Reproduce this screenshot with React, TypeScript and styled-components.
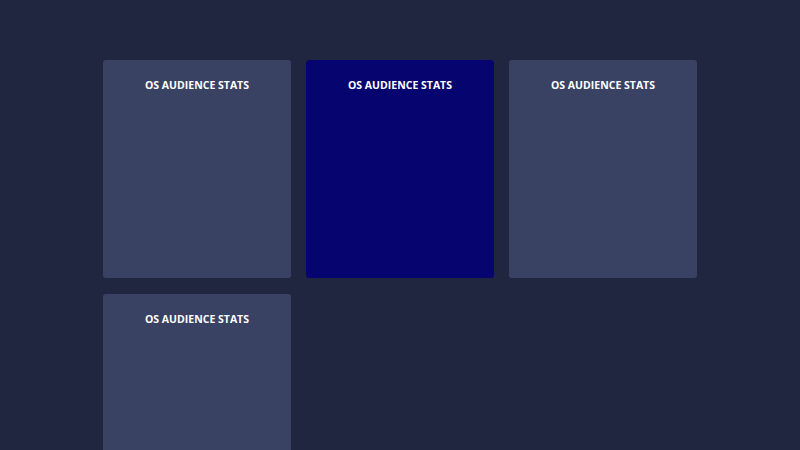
import styled, { createGlobalStyle } from "styled-components";

const GlobalStyle = createGlobalStyle`
  html, body {
    margin: 0;
    padding: 0;
    background: #212640;
  }
  body {
    font-family: "Open Sans", "Liberation Sans", sans-serif;
  }
`;

const widgets = [
  { id: 1, title: "OS AUDIENCE STATS", active: false },
  { id: 2, title: "OS AUDIENCE STATS", active: true },
  { id: 3, title: "OS AUDIENCE STATS", active: false },
  { id: 4, title: "OS AUDIENCE STATS", active: false },
];

const App = () => {
  return (
    <>
      <GlobalStyle />
      <Page>
        <Grid>
          {widgets.map((w) => (
            <Card key={w.id} $active={w.active}>
              <Title>{w.title}</Title>
            </Card>
          ))}
        </Grid>
      </Page>
    </>
  );
};

export default App;

const Page = styled.div`
  min-height: 450px;
  padding-top: 60px;
  box-sizing: border-box;
`;

const Grid = styled.div`
  width: 594px;
  margin: 0 auto;
  display: grid;
  grid-template-columns: repeat(3, 188px);
  column-gap: 15px;
  row-gap: 16px;
`;

const Card = styled.div<{ $active: boolean }>`
  height: 218px;
  border-radius: 3px;
  background: ${(p) => (p.$active ? "#06056f" : "#3a4263")};
  padding-top: 17px;
  box-sizing: border-box;
`;

const Title = styled.div`
  color: #ffffff;
  font-size: 10.5px;
  font-weight: 700;
  line-height: 16px;
  text-align: center;
`;
